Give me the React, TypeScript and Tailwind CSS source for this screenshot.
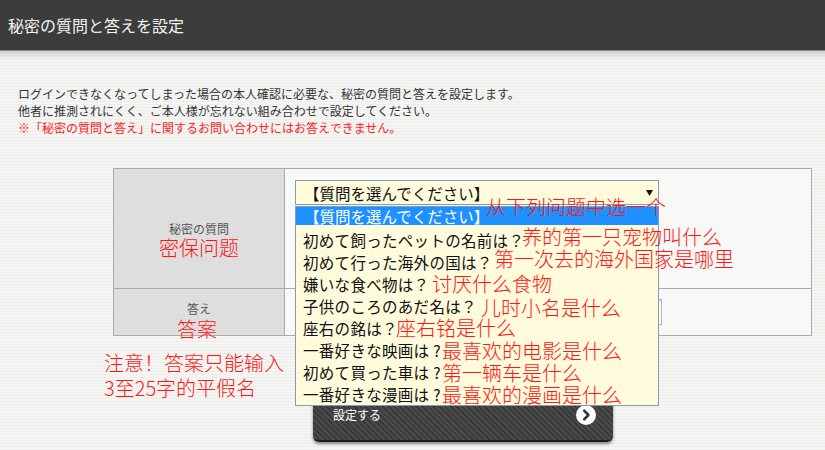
/**
 * SecretQuestionSettings — 秘密の質問と答えを設定 page with the question dropdown opened
 * and the red annotation overlays drawn on top of it.
 */

interface Note {
  text: string;
  left: number;
  top: number;
}

const questions = [
  '初めて飼ったペットの名前は？',
  '初めて行った海外の国は？',
  '嫌いな食べ物は？',
  '子供のころのあだ名は？',
  '座右の銘は？',
  '一番好きな映画は ?',
  '初めて買った車は ?',
  '一番好きな漫画は ?',
];

// red notes painted over the screenshot
const notes: Note[] = [
  { text: '从下列问题中选一个', left: 486, top: 197 },
  { text: '养的第一只宠物叫什么', left: 522, top: 227 },
  { text: '第一次去的海外国家是哪里', left: 494, top: 249 },
  { text: '讨厌什么食物', left: 432, top: 274 },
  { text: '儿时小名是什么', left: 481, top: 298 },
  { text: '座右铭是什么', left: 396, top: 318 },
  { text: '最喜欢的电影是什么', left: 442, top: 341 },
  { text: '第一辆车是什么', left: 442, top: 363 },
  { text: '最喜欢的漫画是什么', left: 442, top: 385 },
  { text: '密保问题', left: 159, top: 238 },
  { text: '答案', left: 177, top: 319 },
  { text: '注意！答案只能输入', left: 104, top: 353 },
  { text: '3至25字的平假名', left: 104, top: 378 },
];

export default function App() {
  return (
    <div className="relative w-[825px] h-[450px] overflow-hidden bg-[repeating-linear-gradient(180deg,#f5f5f3_0px,#f5f5f3_2px,#ededea_2px,#ededea_3px)] font-['Noto_Sans_CJK_JP','Noto_Sans_CJK_SC',sans-serif] text-[#333]">
      {/* Header */}
      <div className="h-[50px] bg-[#3c3c3c] flex items-center pl-[8px]">
        <h1 className="text-[16px] leading-[20px] text-[#f2f2f2]">秘密の質問と答えを設定</h1>
      </div>
      <div className="h-[9px] bg-[linear-gradient(180deg,#8a8a8a_0px,#8a8a8a_1px,#d2d2d2_1px,#e0e0e0_5px,#f2f2f0_9px)]" />

      {/* Intro */}
      <div className="pl-[18px] pt-[26px] text-[12px] leading-[17px]">
        <p>ログインできなくなってしまった場合の本人確認に必要な、秘密の質問と答えを設定します。</p>
        <p>他者に推測されにくく、ご本人様が忘れない組み合わせで設定してください。</p>
        <p className="text-[#ff1a1a]">※「秘密の質問と答え」に関するお問い合わせにはお答えできません。</p>
      </div>

      {/* Form table */}
      <div className="ml-[113px] mt-[32px] w-[699px] border border-[#aaaaaa] grid grid-cols-[171px_1fr]">
        <div className="h-[120px] bg-[#dedede] border-r border-b border-[#aaaaaa] flex items-center justify-center">
          <span className="text-[12px] leading-[16px] text-[#555]">秘密の質問</span>
        </div>
        <div className="h-[120px] bg-[#f8f8f6] border-b border-[#aaaaaa] pl-[10px] pt-[11px]">
          <div className="relative w-[364px] h-[25px] border border-[#7f9db9] bg-[#fffbdc] pl-[8px] pt-[1px] text-[15.5px] leading-[22px] text-[#111]">
            【質問を選んでください】
            <svg className="absolute right-[5px] top-[9px]" width="7" height="6" viewBox="0 0 7 6">
              <polygon points="0,0 7,0 3.5,6" fill="#111" />
            </svg>
          </div>
        </div>
        <div className="h-[46px] bg-[#dedede] border-r border-[#aaaaaa] flex items-start justify-center pt-[13px]">
          <span className="text-[12px] leading-[14px] text-[#555]">答え</span>
        </div>
        <div className="h-[46px] bg-[#f8f8f6] pl-[10px] pt-[10px]">
          <div className="w-[367px] h-[26px] border border-[#b5b5b5] bg-white shadow-[inset_1px_1px_2px_rgba(0,0,0,0.15)]" />
        </div>
      </div>

      {/* Submit button */}
      <div className="ml-[313px] mt-[58px] w-[300px] h-[48px] rounded-[6px] border-b-2 border-[#1c1c1c] bg-[repeating-linear-gradient(45deg,#3a3a3a_0px,#3a3a3a_2px,#4b4b4b_2px,#4b4b4b_4px)] shadow-[0_2px_3px_rgba(0,0,0,0.45)] pt-[11px] pl-[20px] pr-[17px]">
        <div className="h-[20px] flex items-center justify-between">
          <span className="text-[12px] leading-[20px] text-white">設定する</span>
          <span className="w-[20px] h-[20px] rounded-full bg-white flex items-center justify-center">
            <svg width="20" height="20" viewBox="0 0 20 20">
              <path d="M8.2 5.6 L12.4 10 L8.2 14.4" fill="none" stroke="#333" strokeWidth="2.6" strokeLinecap="round" strokeLinejoin="round" />
            </svg>
          </span>
        </div>
      </div>

      {/* Opened dropdown */}
      <div className="absolute left-[295px] top-[206px] w-[364px] border border-[#7f9db9] bg-[#fffbdc] text-[15.5px] text-[#111]">
        <div className="h-[18px] leading-[18px] bg-[#1e90ff] text-white pl-[8px]">【質問を選んでください】</div>
        <div className="pt-[4px]">
          {questions.map((q) => (
            <div key={q} className="h-[22px] leading-[22px] pl-[7px] whitespace-nowrap tracking-[0.3px]">
              {q}
            </div>
          ))}
        </div>
      </div>

      {/* Annotations */}
      {notes.map((n) => (
        <span
          key={n.text}
          className="absolute text-[20px] leading-[20px] font-light text-[#ff1515] whitespace-nowrap font-['Noto_Sans_CJK_SC',sans-serif]"
          style={{ left: n.left, top: n.top }}
        >
          {n.text}
        </span>
      ))}
    </div>
  );
}
